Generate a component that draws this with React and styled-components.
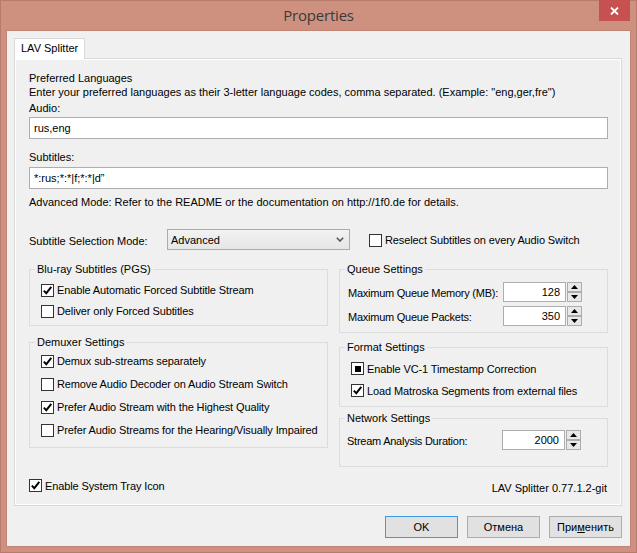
import React from "react";
import styled, { createGlobalStyle } from "styled-components";

const Global = createGlobalStyle`
  html, body { margin: 0; padding: 0; }
  body {
    background: #cf917f;
    font-family: "Liberation Sans", Arial, sans-serif;
    font-size: 11px;
    color: #000;
  }
  * { box-sizing: border-box; }
`;

const Window = styled.div`
  width: 637px;
  height: 553px;
  background: #cf917f;
  box-shadow: inset 0 0 0 1px #b57b6b;
  display: flex;
  flex-direction: column;
  padding: 0 7px 7px 7px;
`;

const TitleBar = styled.div`
  height: 31px;
  display: grid;
  grid-template-columns: 1fr auto 1fr;
  align-items: start;
`;

const Title = styled.div`
  grid-column: 2;
  font-family: "Open Sans", "Noto Sans", sans-serif;
  font-size: 15px;
  line-height: 30px;
  color: #3a3a3a;
  letter-spacing: -0.2px;
`;

const CloseBtn = styled.div`
  grid-column: 3;
  justify-self: end;
  width: 31px;
  height: 21px;
  background: #c75050;
  display: flex;
  align-items: center;
  justify-content: center;
`;

const Client = styled.div`
  flex: 1;
  background: #f0f0f0;
  box-shadow: 0 0 0 1px #c08575;
  display: flex;
  flex-direction: column;
  padding: 7px 8px 0 7px;
`;

const TabStrip = styled.div`
  display: flex;
  position: relative;
  z-index: 1;
  margin-bottom: -1px;
`;

const Tab = styled.div`
  width: 71px;
  height: 21px;
  background: #fff;
  border: 1px solid #d9d9d9;
  border-bottom: none;
  padding-left: 6px;
  line-height: 19px;
  white-space: nowrap;
`;

const Panel = styled.div`
  height: 448px;
  border: 1px solid #d9d9d9;
  box-shadow: inset 0 0 0 1px #fff;
  background: #f0f0f0;
  padding: 12px 13px 0 14px;
  display: flex;
  flex-direction: column;
`;

const Line = styled.div`
  line-height: 14px;
  height: 14px;
  white-space: nowrap;
  margin-top: ${(p) => p.$mt || 0}px;
`;

const TextInput = styled.div`
  height: 22px;
  border: 1px solid #abadb3;
  background: #fff;
  padding-left: 4px;
  line-height: 20px;
  margin-top: ${(p) => p.$mt || 0}px;
  white-space: nowrap;
`;

const ModeRow = styled.div`
  margin-top: 20px;
  height: 21px;
  display: flex;
  align-items: center;
`;

const ModeLabel = styled.div`
  width: 138px;
  padding-top: 2px;
`;

const Combo = styled.div`
  width: 183px;
  height: 21px;
  border: 1px solid #acacac;
  background: linear-gradient(#f2f2f2, #e6e6e6);
  display: flex;
  align-items: center;
  justify-content: space-between;
  padding: 0 5px 0 3px;
  margin-right: 19px;
`;

const Columns = styled.div`
  margin-top: 12px;
  display: grid;
  grid-template-columns: 299px 269px;
  column-gap: 11px;
  align-items: start;
`;

const Column = styled.div`
  display: flex;
  flex-direction: column;
`;

const Group = styled.fieldset`
  margin: ${(p) => p.$mt || 0}px 0 0 0;
  padding: 0;
  border: 1px solid #dcdcdc;
  min-width: 0;
`;

const Legend = styled.legend`
  padding: 0 2px;
  margin-left: 5px;
  line-height: 14px;
  height: 14px;
`;

const GroupBody = styled.div`
  padding: ${(p) => p.$pt}px 8px ${(p) => p.$pb}px ${(p) => p.$pl}px;
  display: flex;
  flex-direction: column;
`;

const CheckRow = styled.label`
  height: ${(p) => p.$h || 21}px;
  display: flex;
  align-items: center;
  white-space: nowrap;
  letter-spacing: -0.12px;
  padding-top: 1px;
`;

const Box = styled.span`
  width: 13px;
  height: 13px;
  flex: none;
  border: 1px solid #333;
  background: #fff;
  margin-right: 3px;
  display: flex;
  align-items: center;
  justify-content: center;
`;

const Mixed = styled.span`
  width: 6px;
  height: 6px;
  background: #000;
`;

const FieldRow = styled.div`
  height: 24px;
  display: grid;
  grid-template-columns: 155px 64px 15px;
  align-items: center;
  white-space: nowrap;
`;

const FieldLabel = styled.span`
  white-space: nowrap;
  letter-spacing: -0.25px;
  padding-top: 1px;
`;

const SpinInput = styled.div`
  height: 20px;
  border: 1px solid #abadb3;
  background: #fff;
  text-align: right;
  padding-right: 5px;
  line-height: 18px;
  margin-right: 1px;
`;

const Spinner = styled.div`
  height: 20px;
  display: flex;
  flex-direction: column;
  justify-content: space-between;
`;

const SpinBtn = styled.div`
  height: 10px;
  border: 1px solid #acacac;
  background: #e8e8e8;
  display: flex;
  align-items: center;
  justify-content: center;
`;

const BottomRow = styled.div`
  margin-top: 9px;
  height: 18px;
  display: flex;
  align-items: center;
  justify-content: space-between;
  padding-right: 0;
`;

const Version = styled.div`
  padding-top: 5px;
  padding-right: 1px;
`;

const ButtonRow = styled.div`
  margin-top: 10px;
  display: flex;
  justify-content: flex-end;
  gap: 9px;
`;

const Button = styled.div`
  width: 73px;
  height: 22px;
  border: 1px solid ${(p) => (p.$default ? "#3c9ae6" : "#adadad")};
  background: #e1e1e1;
  display: flex;
  align-items: center;
  justify-content: center;
  line-height: 14px;
`;

const U = styled.span`
  text-decoration: underline;
`;

const CheckMark = () => (
  <svg width="11" height="11" viewBox="0 0 11 11">
    <path d="M1.8 5.6 L4.3 8.2 L9.3 1.8" fill="none" stroke="#000" strokeWidth="1.9" />
  </svg>
);

const Check = ({ state, children, h }) => (
  <CheckRow $h={h}>
    <Box>{state === "on" ? <CheckMark /> : state === "mixed" ? <Mixed /> : null}</Box>
    {children}
  </CheckRow>
);

const Spin = ({ value }) => (
  <>
    <SpinInput>{value}</SpinInput>
    <Spinner>
      <SpinBtn>
        <svg width="7" height="4" viewBox="0 0 7 4">
          <path d="M0 4 L3.5 0 L7 4 Z" fill="#000" />
        </svg>
      </SpinBtn>
      <SpinBtn>
        <svg width="7" height="4" viewBox="0 0 7 4">
          <path d="M0 0 L3.5 4 L7 0 Z" fill="#000" />
        </svg>
      </SpinBtn>
    </Spinner>
  </>
);

export default function App() {
  return (
    <>
      <Global />
      <Window>
        <TitleBar>
          <Title>Properties</Title>
          <CloseBtn>
            <svg width="9" height="8" viewBox="0 0 9 8">
              <path d="M1 0.5 L8 7.5 M8 0.5 L1 7.5" stroke="#fff" strokeWidth="1.8" />
            </svg>
          </CloseBtn>
        </TitleBar>
        <Client>
          <TabStrip>
            <Tab>LAV Splitter</Tab>
          </TabStrip>
          <Panel>
            <Line>Preferred Languages</Line>
            <Line>
              Enter your preferred languages as their 3-letter language codes, comma separated. (Example: "eng,ger,fre")
            </Line>
            <Line $mt={2}>Audio:</Line>
            <TextInput $mt={2}>rus,eng</TextInput>
            <Line $mt={11}>Subtitles:</Line>
            <TextInput $mt={3}>*:rus;*:*|f;*:*|d”</TextInput>
            <Line $mt={6}>Advanced Mode: Refer to the README or the documentation on http://1f0.de for details.</Line>
            <ModeRow>
              <ModeLabel>Subtitle Selection Mode:</ModeLabel>
              <Combo>
                <span>Advanced</span>
                <svg width="8" height="5" viewBox="0 0 8 5">
                  <path d="M0.8 0.8 L4 4 L7.2 0.8" fill="none" stroke="#555" strokeWidth="1.6" />
                </svg>
              </Combo>
              <Check state="off">Reselect Subtitles on every Audio Switch</Check>
            </ModeRow>
            <Columns>
              <Column>
                <Group>
                  <Legend>Blu-ray Subtitles (PGS)</Legend>
                  <GroupBody $pt={3} $pb={4} $pl={11}>
                    <Check state="on">Enable Automatic Forced Subtitle Stream</Check>
                    <Check state="off">Deliver only Forced Subtitles</Check>
                  </GroupBody>
                </Group>
                <Group $mt={9}>
                  <Legend>Demuxer Settings</Legend>
                  <GroupBody $pt={0} $pb={6} $pl={11}>
                    <Check state="on" h={23}>Demux sub-streams separately</Check>
                    <Check state="off" h={23}>Remove Audio Decoder on Audio Stream Switch</Check>
                    <Check state="on" h={23}>Prefer Audio Stream with the Highest Quality</Check>
                    <Check state="off" h={23}>Prefer Audio Streams for the Hearing/Visually Impaired</Check>
                  </GroupBody>
                </Group>
              </Column>
              <Column>
                <Group>
                  <Legend>Queue Settings</Legend>
                  <GroupBody $pt={4} $pb={4} $pl={8}>
                    <FieldRow>
                      <FieldLabel>Maximum Queue Memory (MB):</FieldLabel>
                      <Spin value="128" />
                    </FieldRow>
                    <FieldRow>
                      <FieldLabel>Maximum Queue Packets:</FieldLabel>
                      <Spin value="350" />
                    </FieldRow>
                  </GroupBody>
                </Group>
                <Group $mt={7}>
                  <Legend>Format Settings</Legend>
                  <GroupBody $pt={3} $pb={5} $pl={11}>
                    <Check state="mixed" h={22}>Enable VC-1 Timestamp Correction</Check>
                    <Check state="on" h={22}>Load Matroska Segments from external files</Check>
                  </GroupBody>
                </Group>
                <Group $mt={4}>
                  <Legend>Network Settings</Legend>
                  <GroupBody $pt={3} $pb={14} $pl={7}>
                    <FieldRow>
                      <FieldLabel>Stream Analysis Duration:</FieldLabel>
                      <Spin value="2000" />
                    </FieldRow>
                  </GroupBody>
                </Group>
              </Column>
            </Columns>
            <BottomRow>
              <Check state="on">Enable System Tray Icon</Check>
              <Version>LAV Splitter 0.77.1.2-git</Version>
            </BottomRow>
          </Panel>
          <ButtonRow>
            <Button $default>OK</Button>
            <Button>Отмена</Button>
            <Button>
              При<U>м</U>енить
            </Button>
          </ButtonRow>
        </Client>
      </Window>
    </>
  );
}
